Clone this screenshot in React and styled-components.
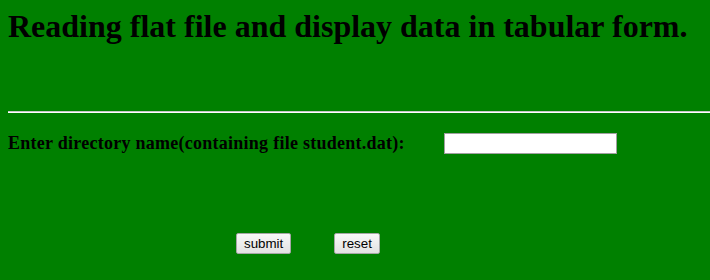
import React from "react";
import styled, { createGlobalStyle } from "styled-components";

const GlobalStyle = createGlobalStyle`
  html, body {
    margin: 0;
    background: #008000;
  }
  body {
    padding: 8px;
    font-family: "Liberation Serif", "Times New Roman", serif;
    color: #000;
    overflow: hidden;
  }
`;

const Title = styled.h1`
  margin: 0;
  font-size: 32px;
  font-weight: bold;
  line-height: 37px;
`;

const Rule = styled.hr`
  margin: 66px -8px 0 0;
  border: 0;
  border-top: 1px solid #c8c8c8;
  border-bottom: 1px solid #ffffff;
  height: 0;
`;

const Form = styled.form`
  display: flex;
  flex-direction: column;
`;

const FieldRow = styled.div`
  display: flex;
  align-items: center;
  margin-top: 20px;
`;

const Label = styled.label`
  width: 436px;
  font-size: 18px;
  font-weight: bold;
  letter-spacing: 0.26px;
`;

const TextInput = styled.input`
  width: 173px;
  height: 21px;
  box-sizing: border-box;
  border: 1px solid #a0a0a0;
  background: #fff;
  padding: 1px 2px;
`;

const ButtonRow = styled.div`
  display: flex;
  gap: 43px;
  margin-top: 79px;
  padding-left: 228px;
`;

const Button = styled.button`
  height: 21px;
  padding: 0 7px;
  font-family: "Liberation Sans", Arial, sans-serif;
  font-size: 13.33px;
  color: #000;
  background: linear-gradient(#f8f8f8, #e2e2e2);
  border: 1px solid #a6a6a6;
  border-radius: 2px;
`;

export default function App() {
  return (
    <>
      <GlobalStyle />
      <Title>Reading flat file and display data in tabular form.</Title>
      <Rule />
      <Form onSubmit={(e) => e.preventDefault()}>
        <FieldRow>
          <Label htmlFor="dir">Enter directory name(containing file student.dat):</Label>
          <TextInput id="dir" type="text" />
        </FieldRow>
        <ButtonRow>
          <Button type="submit">submit</Button>
          <Button type="reset">reset</Button>
        </ButtonRow>
      </Form>
    </>
  );
}
